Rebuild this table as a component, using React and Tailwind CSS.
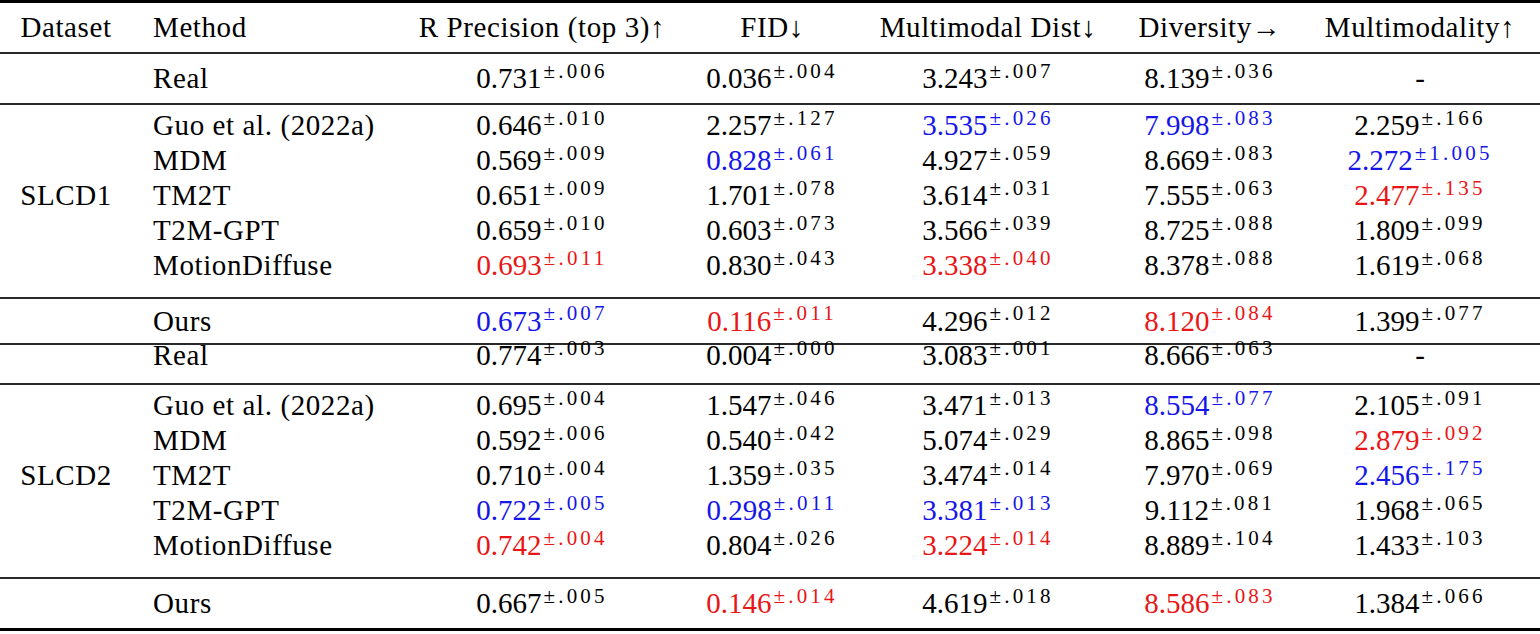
const COLORS = {
    b: "text-[#1616e8]",
    r: "text-[#e81616]",
};

const slcd1 = {
    real: ["0.731|.006", "0.036|.004", "3.243|.007", "8.139|.036", "-"],
    rows: [
        ["Guo et al. (2022a)", ["0.646|.010", "2.257|.127", "3.535|.026|b", "7.998|.083|b", "2.259|.166"]],
        ["MDM", ["0.569|.009", "0.828|.061|b", "4.927|.059", "8.669|.083", "2.272|1.005|b"]],
        ["TM2T", ["0.651|.009", "1.701|.078", "3.614|.031", "7.555|.063", "2.477|.135|r"]],
        ["T2M-GPT", ["0.659|.010", "0.603|.073", "3.566|.039", "8.725|.088", "1.809|.099"]],
        ["MotionDiffuse", ["0.693|.011|r", "0.830|.043", "3.338|.040|r", "8.378|.088", "1.619|.068"]],
    ],
    ours: ["0.673|.007|b", "0.116|.011|r", "4.296|.012", "8.120|.084|r", "1.399|.077"],
};

const slcd2 = {
    real: ["0.774|.003", "0.004|.000", "3.083|.001", "8.666|.063", "-"],
    rows: [
        ["Guo et al. (2022a)", ["0.695|.004", "1.547|.046", "3.471|.013", "8.554|.077|b", "2.105|.091"]],
        ["MDM", ["0.592|.006", "0.540|.042", "5.074|.029", "8.865|.098", "2.879|.092|r"]],
        ["TM2T", ["0.710|.004", "1.359|.035", "3.474|.014", "7.970|.069", "2.456|.175|b"]],
        ["T2M-GPT", ["0.722|.005|b", "0.298|.011|b", "3.381|.013|b", "9.112|.081", "1.968|.065"]],
        ["MotionDiffuse", ["0.742|.004|r", "0.804|.026", "3.224|.014|r", "8.889|.104", "1.433|.103"]],
    ],
    ours: ["0.667|.005", "0.146|.014|r", "4.619|.018", "8.586|.083|r", "1.384|.066"],
};

const Num = ({ v }) => {
    if (v === "-") return <span>-</span>;
    const [main, sd, c] = v.split("|");
    return (
        <span className={c ? COLORS[c] : ""}>
            {main}
            <sup className="text-[21px] tracking-[3.2px] ml-[2px]">±{sd}</sup>
        </span>
    );
};

const Rule = ({ thick }) => (
    <div className={thick ? "h-[3px] bg-black" : "h-[2px] bg-[#2a2a2a]"} />
);

const Cells = ({ label, vals }) => (
    <>
        <div className="pl-[21px] tracking-[0.6px]">{label}</div>
        {vals.map((v, i) => (
            <div key={i} className="text-center">
                <Num v={v} />
            </div>
        ))}
    </>
);

const FullRow = ({ label, vals, className }) => (
    <div className={`grid grid-cols-[132px_264px_292px_168px_264px_180px_1fr] ${className}`}>
        <div />
        <Cells label={label} vals={vals} />
    </div>
);

const Block = ({ name, rows }) => (
    <div className="flex pt-[3px] pb-[14px]">
        <div className="w-[132px] flex items-center justify-center tracking-[0.6px]">{name}</div>
        <div className="flex-1 flex flex-col">
            {rows.map(([label, vals]) => (
                <div key={label} className="grid grid-cols-[264px_292px_168px_264px_180px_1fr] h-[35px] items-center">
                    <Cells label={label} vals={vals} />
                </div>
            ))}
        </div>
    </div>
);

export default function App() {
    const headers = ["R Precision (top 3)↑", "FID↓", "Multimodal Dist↓", "Diversity→", "Multimodality↑"];
    return (
        <div className="w-[1540px] h-[634px] bg-white text-black [font-family:'Liberation_Serif',serif] text-[29px] leading-[29px]">
            <Rule thick />
            <div className="grid grid-cols-[132px_264px_292px_168px_264px_180px_1fr] h-[49px] items-center tracking-[0.6px]">
                <div className="text-center">Dataset</div>
                <div className="pl-[21px]">Method</div>
                {headers.map(h => (
                    <div key={h} className="text-center">{h}</div>
                ))}
            </div>
            <Rule />
            <FullRow label="Real" vals={slcd1.real} className="h-[49px] items-center" />
            <Rule />
            <Block name="SLCD1" rows={slcd1.rows} />
            <Rule />
            <FullRow label="Ours" vals={slcd1.ours} className="h-[44px] items-center" />
            <Rule />
            <FullRow label="Real" vals={slcd2.real} className="h-[38px] items-start leading-[20px]" />
            <Rule />
            <Block name="SLCD2" rows={slcd2.rows} />
            <Rule />
            <FullRow label="Ours" vals={slcd2.ours} className="h-[49px] items-center" />
            <Rule thick />
        </div>
    );
}
